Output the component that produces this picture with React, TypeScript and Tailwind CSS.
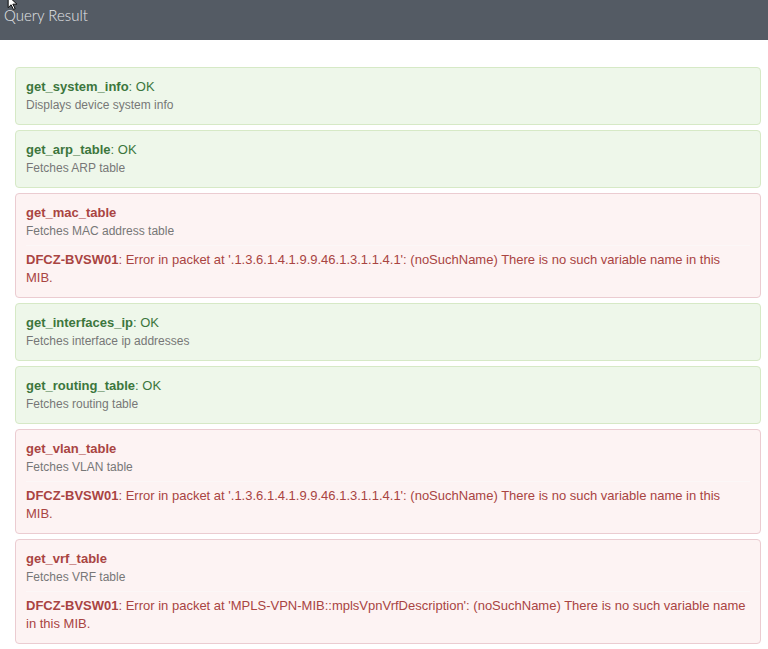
const results = [
  { name: "get_system_info", desc: "Displays device system info", ok: true },
  { name: "get_arp_table", desc: "Fetches ARP table", ok: true },
  {
    name: "get_mac_table",
    desc: "Fetches MAC address table",
    ok: false,
    host: "DFCZ-BVSW01",
    error: "Error in packet at '.1.3.6.1.4.1.9.9.46.1.3.1.1.4.1': (noSuchName) There is no such variable name in this MIB.",
  },
  { name: "get_interfaces_ip", desc: "Fetches interface ip addresses", ok: true },
  { name: "get_routing_table", desc: "Fetches routing table", ok: true },
  {
    name: "get_vlan_table",
    desc: "Fetches VLAN table",
    ok: false,
    host: "DFCZ-BVSW01",
    error: "Error in packet at '.1.3.6.1.4.1.9.9.46.1.3.1.1.4.1': (noSuchName) There is no such variable name in this MIB.",
  },
  {
    name: "get_vrf_table",
    desc: "Fetches VRF table",
    ok: false,
    host: "DFCZ-BVSW01",
    error: "Error in packet at 'MPLS-VPN-MIB::mplsVpnVrfDescription': (noSuchName) There is no such variable name in this MIB.",
  },
]

export default function App() {
  return (
    <div className="min-h-[649px] bg-white font-['Liberation_Sans',Arial,sans-serif]">
      <div className="relative h-[40px] bg-[#545b64] px-[4px] pt-[4px]">
        <svg className="absolute left-[7px] top-[-4px]" width="14" height="14" viewBox="0 0 12 12">
          <path d="M1 0 L1 10 L3.5 7.5 L5.5 11.5 L7 10.8 L5 7 L8.5 7 Z" fill="#fff" stroke="#000" strokeWidth="0.8" />
        </svg>
        <h1 className="text-[15px] font-light leading-[22px] text-[#e3e5e8] font-['Lato','Open_Sans',sans-serif]">
          Query Result
        </h1>
      </div>

      <div className="ml-[15px] mr-[7px] pt-[27px] flex flex-col gap-[5px]">
        {results.map((r) =>
          r.ok ? (
            <div
              key={r.name}
              className="rounded-[4px] border border-[#d6e9c6] bg-[#eef7ea] px-[10px] py-[10px]"
            >
              <div className="text-[13px] leading-[18px] text-[#3c763d]">
                <span className="font-bold">{r.name}</span>: OK
              </div>
              <div className="text-[12px] leading-[18px] text-[#777]">{r.desc}</div>
            </div>
          ) : (
            <div
              key={r.name}
              className="rounded-[4px] border border-[#ebccd1] bg-[#fdf3f3] px-[10px] py-[10px]"
            >
              <div className="text-[13px] leading-[18px] font-bold text-[#a94442]">{r.name}</div>
              <div className="text-[12px] leading-[18px] text-[#777]">{r.desc}</div>
              <div className="mt-[5px] border-t border-[#fcf7f7] pt-[5px] text-[13px] leading-[18px] text-[#a94442]">
                <span className="font-bold">{r.host}</span>: {r.error}
              </div>
            </div>
          )
        )}
      </div>
    </div>
  )
}
